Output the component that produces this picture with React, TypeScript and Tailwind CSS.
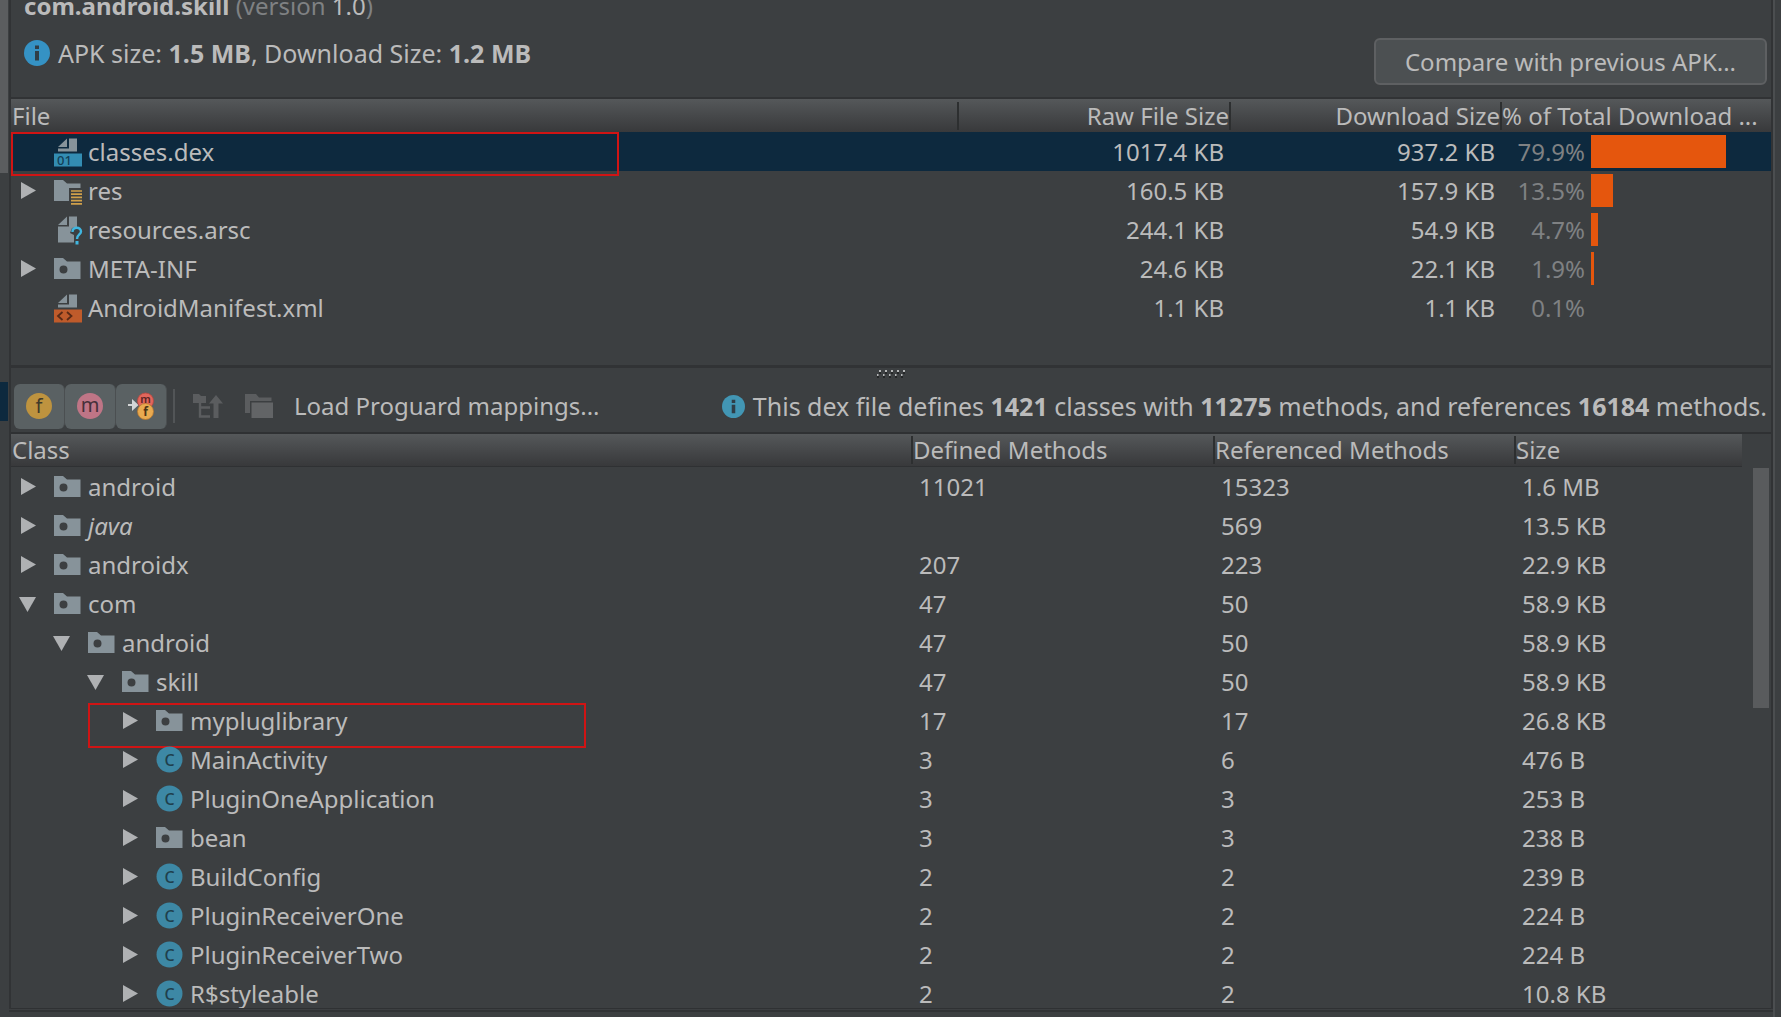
import type { ReactNode } from "react";

type IconName = "dex" | "res" | "arsc" | "package" | "xml" | "class";

interface FileRow {
  name: string;
  icon: IconName;
  expandable?: boolean;
  raw: string;
  download: string;
  percent: number;
  selected?: boolean;
}

interface ClassRow {
  name: string;
  icon: IconName;
  level: number;
  open?: boolean;
  italic?: boolean;
  marked?: boolean;
  defined: string;
  referenced: string;
  size: string;
}

const files: FileRow[] = [
  { name: "classes.dex", icon: "dex", raw: "1017.4 KB", download: "937.2 KB", percent: 79.9, selected: true },
  { name: "res", icon: "res", expandable: true, raw: "160.5 KB", download: "157.9 KB", percent: 13.5 },
  { name: "resources.arsc", icon: "arsc", raw: "244.1 KB", download: "54.9 KB", percent: 4.7 },
  { name: "META-INF", icon: "package", expandable: true, raw: "24.6 KB", download: "22.1 KB", percent: 1.9 },
  { name: "AndroidManifest.xml", icon: "xml", raw: "1.1 KB", download: "1.1 KB", percent: 0.1 },
];

const classes: ClassRow[] = [
  { name: "android", icon: "package", level: 0, defined: "11021", referenced: "15323", size: "1.6 MB" },
  { name: "java", icon: "package", level: 0, italic: true, defined: "", referenced: "569", size: "13.5 KB" },
  { name: "androidx", icon: "package", level: 0, defined: "207", referenced: "223", size: "22.9 KB" },
  { name: "com", icon: "package", level: 0, open: true, defined: "47", referenced: "50", size: "58.9 KB" },
  { name: "android", icon: "package", level: 1, open: true, defined: "47", referenced: "50", size: "58.9 KB" },
  { name: "skill", icon: "package", level: 2, open: true, defined: "47", referenced: "50", size: "58.9 KB" },
  { name: "mypluglibrary", icon: "package", level: 3, marked: true, defined: "17", referenced: "17", size: "26.8 KB" },
  { name: "MainActivity", icon: "class", level: 3, defined: "3", referenced: "6", size: "476 B" },
  { name: "PluginOneApplication", icon: "class", level: 3, defined: "3", referenced: "3", size: "253 B" },
  { name: "bean", icon: "package", level: 3, defined: "3", referenced: "3", size: "238 B" },
  { name: "BuildConfig", icon: "class", level: 3, defined: "2", referenced: "2", size: "239 B" },
  { name: "PluginReceiverOne", icon: "class", level: 3, defined: "2", referenced: "2", size: "224 B" },
  { name: "PluginReceiverTwo", icon: "class", level: 3, defined: "2", referenced: "2", size: "224 B" },
  { name: "R$styleable", icon: "class", level: 3, defined: "2", referenced: "2", size: "10.8 KB" },
];

const INDENT = 34;

const FileTop = () => (
  <g fill="#87939a">
    <path d="M5 11 L14 2.5 V11 Z" />
    <path d="M16 2.5 H24 V15.5 H5 V12.5 H16 Z" />
  </g>
);

const TreeIcon = ({ name }: { name: IconName }) => (
  <svg viewBox="0 0 30 31" className="h-[31px] w-[30px] shrink-0" aria-hidden="true">
    {name === "dex" && (
      <>
        <FileTop />
        <rect x="1" y="17.5" width="28" height="13" fill="#338db3" />
        <text x="4" y="28.5" fontSize="13" fontWeight="500" fill="#123f57">
          01
        </text>
      </>
    )}
    {name === "xml" && (
      <>
        <FileTop />
        <rect x="1" y="17.5" width="28" height="13" fill="#bf5b2b" />
        <path d="M9.5 20 L5 24 L9.5 28 M14 20 L18.5 24 L14 28" fill="none" stroke="#592a16" strokeWidth="1.8" />
      </>
    )}
    {name === "arsc" && (
      <>
        <path d="M5 11 L14 2.5 V11 Z" fill="#87939a" />
        <path d="M16 2.5 H24 V13 L19 14 L17 19 L21 21 V28.5 H5 V12.5 H16 Z" fill="#87939a" />
        <path
          d="M19.5 18 C19.5 12.5 28 12.5 28 17.5 C28 20.5 24 20.5 24 25"
          fill="none"
          stroke="#40b6e0"
          strokeWidth="2.4"
        />
        <rect x="22.5" y="27" width="3" height="3.5" fill="#40b6e0" />
      </>
    )}
    {name === "res" && (
      <>
        <path d="M1 5 H10 L14 8.5 H27.5 V13 H16 V26 H1 Z" fill="#87939a" />
        <path d="M18 16 H29 M18 19.2 H29 M18 22.4 H29 M18 25.6 H29 M18 28.8 H29" stroke="#d0a04a" strokeWidth="1.7" />
      </>
    )}
    {name === "package" && (
      <path
        fillRule="evenodd"
        d="M1 5 H10 L14 8.5 H27.5 V26 H1 Z M10.5 12.5 A4 4 0 1 0 10.5 20.5 A4 4 0 1 0 10.5 12.5 Z"
        fill="#87939a"
      />
    )}
    {name === "class" && (
      <>
        <circle cx="14.5" cy="15.5" r="13" fill="#3d88a5" />
        <text x="14.5" y="21.5" fontSize="16" fontWeight="500" textAnchor="middle" fill="#1f3f4d">
          C
        </text>
      </>
    )}
  </svg>
);

const Arrow = ({ open }: { open?: boolean }) => (
  <svg viewBox="0 0 18 18" className="block h-[18px] w-[18px]">
    {open ? <path d="M0 2 H17 L8.5 17 Z" fill="#afb1b3" /> : <path d="M2 0 L17 8.5 L2 17 Z" fill="#afb1b3" />}
  </svg>
);

const TreeNode = ({
  name,
  icon,
  level = 0,
  open,
  expandable = true,
  italic,
}: {
  name: string;
  icon: IconName;
  level?: number;
  open?: boolean;
  expandable?: boolean;
  italic?: boolean;
}) => (
  <div className="flex h-[39px] items-center pl-2" style={{ marginLeft: level * INDENT }}>
    <div className="w-[34px] shrink-0">
      {expandable && (
        <button type="button" className="block" aria-expanded={!!open} aria-label={`Toggle ${name}`}>
          <Arrow open={open} />
        </button>
      )}
    </div>
    <TreeIcon name={icon} />
    <span className={italic ? "pl-[5px] italic" : "pl-[5px]"}>{name}</span>
  </div>
);

const InfoIcon = ({ className, color }: { className: string; color: string }) => (
  <svg viewBox="0 0 26 26" className={className} aria-hidden="true">
    <circle cx="13" cy="13" r="13" fill={color} />
    <path d="M11 5.5 H15 V9 H11 Z M11 11 H15 V20.5 H11 Z" fill="#2f3e47" />
  </svg>
);

// Header cell with the dark separator on its left side
const HeaderCell = ({ children, right }: { children: ReactNode; right?: boolean }) => (
  <th className="p-0 py-[2px] font-normal">
    <div
      className={
        right
          ? "h-[28px] whitespace-nowrap border-l-2 border-[#2d2f30] text-right leading-[28px]"
          : "h-[28px] whitespace-nowrap border-l-2 border-[#2d2f30] text-left leading-[28px]"
      }
    >
      {children}
    </div>
  </th>
);

const ToggleButton = ({ label, children }: { label: string; children: ReactNode }) => (
  <button
    type="button"
    aria-label={label}
    aria-pressed="true"
    className="flex h-[45px] w-[51px] items-center justify-center rounded-md border-r border-[#4b4f51] bg-[#5a6163]"
  >
    {children}
  </button>
);

const ApkHeader = () => (
  <header className="flex h-[97px] shrink-0 justify-between overflow-hidden pr-1 pl-[13px]">
    <div>
      <h1 className="-mt-[10px] h-[34px] leading-[32px] text-[#7f8183]">
        <b className="text-[#bbbbbb]">com.android.skill</b> (version <span className="text-[#bbbbbb]">1.0</span>)
      </h1>
      <p className="mt-[12px] flex h-[34px] items-center text-[25px]">
        <InfoIcon className="mr-2 h-[26px] w-[26px]" color="#3592c4" />
        <span>
          APK size: <b>1.5 MB</b>, Download Size: <b>1.2 MB</b>
        </span>
      </p>
    </div>
    <button
      type="button"
      className="mt-[38px] h-[47px] w-[393px] rounded-md border-2 border-[#5e6062] bg-[#4c5052] leading-none"
    >
      Compare with previous APK...
    </button>
  </header>
);

const FileTable = () => (
  <section className="h-[271px] shrink-0 border-t-2 border-b-3 border-[#313335]">
    <table className="w-full table-fixed border-collapse">
      <colgroup>
        <col />
        <col className="w-[272px]" />
        <col className="w-[271px]" />
        <col className="w-[271px]" />
      </colgroup>
      <thead>
        <tr className="h-[33px] bg-linear-to-b from-[#55585a] to-[#38393b]">
          <th className="p-0 pl-px text-left leading-[28px] font-normal">File</th>
          <HeaderCell right>Raw File Size</HeaderCell>
          <HeaderCell right>Download Size</HeaderCell>
          <HeaderCell>% of Total Download ...</HeaderCell>
        </tr>
      </thead>
      <tbody>
        {files.map(({ name, icon, expandable, raw, download, percent, selected }) => (
          <tr key={name} className={selected ? "h-[39px] bg-[#0d293e]" : "h-[39px]"}>
            <td className="relative p-0">
              <TreeNode name={name} icon={icon} expandable={!!expandable} />
              {selected && <div className="absolute top-0 left-0 h-[44px] w-[608px] border-2 border-[#d01414]" />}
            </td>
            <td className="p-0 pr-[5px] text-right">{raw}</td>
            <td className="p-0 pr-[5px] text-right">{download}</td>
            <td className="p-0">
              <div className="flex items-center">
                <span className="w-[85px] text-right text-[#7f8183]">{percent.toFixed(1)}%</span>
                <div className="ml-[6px] h-[33px] bg-[#e5560d]" style={{ width: Math.floor(percent * 1.7) }} />
              </div>
            </td>
          </tr>
        ))}
      </tbody>
    </table>
  </section>
);

const Splitter = () => (
  <div className="flex h-[12px] shrink-0 justify-center">
    <svg viewBox="0 0 28 8" className="mt-[2px] h-[8px] w-[28px]" aria-hidden="true">
      {[0, 1, 2, 3, 4].map((i) => (
        <g key={i}>
          <path d={`M${i * 6 + 2} 2 h2 v2 h-2 Z M${i * 6} 6 h2 v2 h-2 Z`} fill="#242627" />
          <path d={`M${i * 6 + 2} 0 h2 v2 h-2 Z M${i * 6} 4 h1.5 v2 h-1.5 Z`} fill="#b4b6b7" />
        </g>
      ))}
    </svg>
  </div>
);

const Toolbar = () => (
  <div className="flex h-[52px] shrink-0 items-center justify-between pr-1 pl-[3px]">
    <div className="flex items-center">
      <ToggleButton label="Show fields">
        <svg viewBox="0 0 26 26" className="h-[26px] w-[26px]">
          <circle cx="13" cy="13" r="13" fill="#be933f" />
          <text x="13" y="20" fontSize="20" textAnchor="middle" fill="#413a2a">
            f
          </text>
        </svg>
      </ToggleButton>
      <ToggleButton label="Show methods">
        <svg viewBox="0 0 26 26" className="h-[26px] w-[26px]">
          <circle cx="13" cy="13" r="13" fill="#bf7586" />
          <text x="13" y="19" fontSize="20" textAnchor="middle" fill="#46303a">
            m
          </text>
        </svg>
      </ToggleButton>
      <ToggleButton label="Show all referenced methods and fields">
        <svg viewBox="0 0 28 28" className="h-[28px] w-[28px]">
          <path d="M1 12 H5 V7 L11.5 13 L5 19 V14 H1 Z" fill="#d3d5d6" />
          <circle cx="18.5" cy="9" r="8" fill="#e2665c" stroke="#b8463f" strokeWidth="0.8" />
          <text x="18.5" y="10.5" fontSize="11" fontWeight="600" textAnchor="middle" fill="#5b2424">
            m
          </text>
          <circle cx="18.5" cy="19.5" r="8" fill="#e9aa50" stroke="#b9792f" strokeWidth="0.8" />
          <text x="18.5" y="24" fontSize="12" fontWeight="700" textAnchor="middle" fill="#4b3417">
            f
          </text>
        </svg>
      </ToggleButton>
      <div className="mx-[6px] h-[34px] w-[2px] bg-[#525557]" />
      <button type="button" disabled aria-label="Show removed nodes" className="ml-3">
        <svg viewBox="0 0 30 26" className="block h-[26px] w-[30px]">
          <path d="M0 1 H6 L8 3 H13 V10 H0 Z" fill="#5b5d5f" />
          <path d="M7 10 V23.5 H17 M7 14.5 H17" fill="none" stroke="#5b5d5f" strokeWidth="2.4" />
          <path d="M23 2 L30 10.5 H25.5 V25 H20.5 V10.5 H16 Z" fill="#5b5d5f" />
        </svg>
      </button>
      <button type="button" disabled aria-label="Deobfuscate names" className="ml-[22px]">
        <svg viewBox="0 0 30 26" className="block h-[26px] w-[30px]">
          <path d="M0 1 H11 L14 4.5 H26.5 V8 H5 V20 H0 Z" fill="#5b5d5f" />
          <path d="M6.5 9.5 H28 V25 H6.5 Z" fill="#626466" />
        </svg>
      </button>
      <button type="button" className="ml-[19px]">
        Load Proguard mappings...
      </button>
    </div>
    <p className="flex items-center text-[25px] whitespace-nowrap">
      <InfoIcon className="mr-2 h-[23px] w-[23px]" color="#4296b4" />
      <span>
        This dex file defines <b>1421</b> classes with <b>11275</b> methods, and references <b>16184</b> methods.
      </span>
    </p>
  </div>
);

const ClassTable = () => (
  <section className="flex min-h-0 flex-1 overflow-hidden border-t-2 border-b border-[#2f3133]">
    <table className="h-fit min-w-0 flex-1 table-fixed border-collapse">
      <colgroup>
        <col />
        <col className="w-[302px]" />
        <col className="w-[301px]" />
        <col className="w-[228px]" />
      </colgroup>
      <thead>
        <tr className="h-[32px] border-b border-[#2f3133] bg-linear-to-b from-[#55585a] to-[#38393b]">
          <th className="p-0 pl-px text-left leading-[28px] font-normal">Class</th>
          <HeaderCell>Defined Methods</HeaderCell>
          <HeaderCell>Referenced Methods</HeaderCell>
          <HeaderCell>Size</HeaderCell>
        </tr>
      </thead>
      <tbody>
        {classes.map(({ name, icon, level, open, italic, marked, defined, referenced, size }, index) => (
          <tr key={index} className="h-[39px]">
            <td className="relative p-0">
              <TreeNode name={name} icon={icon} level={level} open={open} italic={italic} />
              {marked && (
                <div className="absolute top-[2px] left-[77px] h-[45px] w-[498px] border-2 border-[#d01414]" />
              )}
            </td>
            <td className="p-0 pl-2">{defined}</td>
            <td className="p-0 pl-2">{referenced}</td>
            <td className="p-0 pl-2">{size}</td>
          </tr>
        ))}
      </tbody>
    </table>
    <div className="w-[29px] shrink-0 pt-[34px] pl-[11px]">
      <div className="h-[240px] w-4 bg-[#595b5d]" />
    </div>
  </section>
);

const App = () => {
  return (
    <div className="flex h-screen overflow-hidden bg-[#3c3f41] font-['Noto_Sans','Open_Sans',sans-serif] text-[24px] leading-[32px] text-[#bbbbbb]">
      {/* edge of the neighbouring panel */}
      <div className="flex w-[9px] shrink-0 flex-col pr-px">
        <div className="h-[173px] bg-[#5b5d5f]" />
        <div className="mt-[209px] h-[39px] bg-[#0d293e]" />
      </div>
      <div className="flex min-w-0 flex-1 flex-col">
        <main className="flex min-h-0 flex-1 flex-col border-l-2 border-[#313335]">
          <div className="flex min-h-0 flex-1 flex-col border-r-2 border-[#313335]">
            <ApkHeader />
            <FileTable />
            <Splitter />
            <Toolbar />
            <ClassTable />
          </div>
        </main>
        <div className="mt-px mb-[5px] h-[2px] shrink-0 bg-[#313335]" />
      </div>
      <div className="w-2 shrink-0 border-l-2 border-[#4b4e50]" />
    </div>
  );
};

export default App;
